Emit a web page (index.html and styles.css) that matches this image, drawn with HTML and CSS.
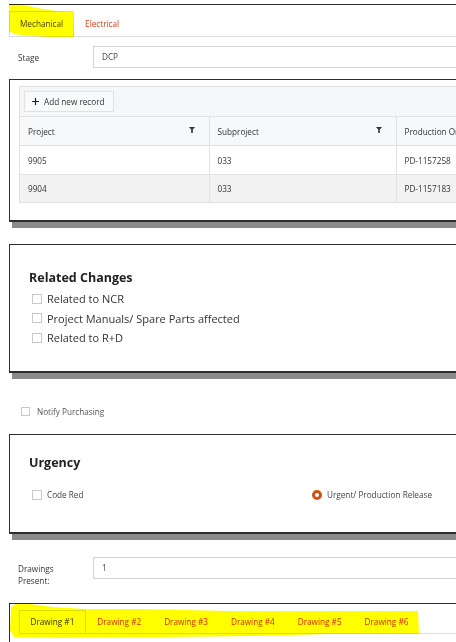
FILE: index.html
```html
<!DOCTYPE html>
<html lang="en">
<head>
    <meta charset="UTF-8">
    <meta name="viewport" content="width=device-width, initial-scale=1.0">
    <title>Change Request</title>
    <link rel="stylesheet" href="styles.css">
</head>
<body>
    <div class="screen">
        <!-- Discipline tabs and stage -->
        <section class="top">
            <nav class="tabs">
                <span class="tab active">Mechanical</span>
                <span class="tab">Electrical</span>
            </nav>
            <div class="field">
                <label class="field-label">Stage</label>
                <div class="field-input">DCP</div>
            </div>
        </section>

        <!-- Production orders grid -->
        <section class="panel panel-grid">
            <div class="grid">
                <div class="grid-toolbar">
                    <button class="btn-add">
                        <svg width="7" height="7" viewBox="0 0 7 7"><path d="M3.5 0V7M0 3.5H7" stroke="#222" stroke-width="1.2"/></svg>
                        Add new record
                    </button>
                </div>
                <table>
                    <colgroup>
                        <col class="col-project">
                        <col class="col-sub">
                        <col class="col-order">
                    </colgroup>
                    <thead>
                        <tr>
                            <th>Project <svg class="filter" viewBox="0 0 6 6"><path d="M0 0H6L3.8 2.6V6H2.2V2.6Z" fill="#333"/></svg></th>
                            <th>Subproject <svg class="filter" viewBox="0 0 6 6"><path d="M0 0H6L3.8 2.6V6H2.2V2.6Z" fill="#333"/></svg></th>
                            <th>Production Order</th>
                        </tr>
                    </thead>
                    <tbody>
                        <tr><td>9905</td><td>033</td><td>PD-1157258</td></tr>
                        <tr class="alt"><td>9904</td><td>033</td><td>PD-1157183</td></tr>
                    </tbody>
                </table>
            </div>
        </section>

        <!-- Related changes -->
        <section class="panel panel-related">
            <h3>Related Changes</h3>
            <ul class="checks">
                <li><span class="box"></span>Related to NCR</li>
                <li><span class="box"></span>Project Manuals/ Spare Parts affected</li>
                <li><span class="box"></span>Related to R+D</li>
            </ul>
        </section>

        <label class="notify"><span class="box small"></span>Notify Purchasing</label>

        <!-- Urgency -->
        <section class="panel panel-urgency">
            <h3>Urgency</h3>
            <div class="urgency-row">
                <label class="opt"><span class="box"></span>Code Red</label>
                <label class="opt"><span class="radio"></span>Urgent/ Production Release</label>
            </div>
        </section>

        <div class="field field-drawings">
            <label class="field-label">Drawings<br>Present:</label>
            <div class="field-input">1</div>
        </div>

        <!-- Drawing tabs -->
        <section class="panel panel-drawings">
            <nav class="tabs">
                <span class="tab active">Drawing #1</span>
                <span class="tab">Drawing #2</span>
                <span class="tab">Drawing #3</span>
                <span class="tab">Drawing #4</span>
                <span class="tab">Drawing #5</span>
                <span class="tab">Drawing #6</span>
            </nav>
        </section>
    </div>

    <!-- marker highlights drawn over the screenshot -->
    <svg class="highlight" viewBox="0 0 456 642" width="456" height="642">
        <polygon points="9,4 16,4 28,6 42,9 56,11 73,12 74,37 52,37 30,36 14,34 9,31"/>
        <polygon points="11,607 18,603 30,604 52,607 85,609 140,609 228,611 418,611 419,634 328,634 255,636 160,637 60,638 14,637 10,630"/>
    </svg>
</body>
</html>
```

FILE: styles.css
```css
html, body {
    margin: 0;
    height: 642px;
    overflow: hidden;
}
body {
    font-family: "Open Sans", Arial, sans-serif;
    font-size: 8.2px;
    color: #333;
    background: #fff;
    position: relative;
}
.screen {
    width: 640px;
    padding-left: 9px;
}

/* tabs */
.top {
    margin-top: 4px;
    border-top: 1px solid #2d2d2d;
    padding-top: 6px;
}
.tabs {
    display: flex;
    border-bottom: 1px solid #dadde1;
    height: 25px;
}
.tab {
    padding: 0 10px;
    line-height: 24px;
    border: 1px solid transparent;
    border-bottom: none;
    color: #d0401e;
}
.tab.active {
    border-color: #dadde1;
    color: #444;
}

/* label + input rows */
.field {
    display: flex;
    align-items: center;
    padding: 9px 0 11px 9px;
}
.field-label {
    width: 75px;
    color: #333;
}
.field-input {
    flex: 1;
    height: 22px;
    box-sizing: border-box;
    border: 1px solid #d0d3d7;
    padding-left: 8px;
    line-height: 20px;
    color: #444;
}

/* framed panels */
.panel {
    border: 1px solid #2d2d2d;
    border-right: none;
    border-bottom-width: 2px;
    box-shadow: 3px 6px 0 #8a8a8a;
}
.panel h3 {
    margin: 0;
    font-size: 12.5px;
    line-height: 17px;
    font-weight: 700;
    color: #222;
}

.panel-grid {
    padding: 6px 0 17px 9px;
}
.grid {
    border: 1px solid #dfe1e4;
    border-right: none;
}
.grid-toolbar {
    height: 30px;
    background: #f5f6f8;
    padding: 4px 0 0 4px;
    box-sizing: border-box;
    border-bottom: 1px solid #dfe1e4;
}
.btn-add {
    height: 21px;
    padding: 0 8px 0 7px;
    border: 1px solid #dfe1e4;
    background: #f9fafb;
    font-family: inherit;
    font-size: 8.2px;
    color: #333;
    display: flex;
    align-items: center;
    gap: 5px;
}
table {
    border-collapse: collapse;
    table-layout: fixed;
    width: 596px;
}
.col-project { width: 189px; }
.col-sub { width: 187px; }
.col-order { width: 220px; }
th, td {
    text-align: left;
    font-weight: 400;
    padding: 0 8px;
    border-right: 1px solid #dfe1e4;
    border-bottom: 1px solid #dfe1e4;
    white-space: nowrap;
    overflow: hidden;
}
th {
    height: 28px;
    background: #f7f8fa;
    position: relative;
}
td {
    height: 28px;
}
tbody tr:last-child td {
    border-bottom: none;
    height: 27px;
}
tr.alt td {
    background: #f2f2f2;
}
.filter {
    position: absolute;
    right: 14px;
    top: 10px;
    width: 6px;
    height: 6px;
}

.panel-related {
    margin-top: 22px;
    padding: 24px 0 23px 19px;
}
.checks {
    list-style: none;
    margin: 3px 0 0;
    padding: 0 0 0 3px;
    font-size: 11px;
    color: #333;
}
.checks li {
    display: flex;
    align-items: center;
    height: 19.5px;
}
.box {
    width: 10px;
    height: 10px;
    box-sizing: border-box;
    border: 1px solid #c9c9c9;
    background: #fff;
    margin-right: 5px;
    flex: none;
}
.box.small {
    width: 9px;
    height: 9px;
    margin-right: 7px;
}

.notify {
    display: flex;
    align-items: center;
    height: 14px;
    margin: 32px 0 15px 12px;
    color: #555;
}

.panel-urgency {
    padding: 19px 0 30px 19px;
}
.urgency-row {
    display: grid;
    grid-template-columns: 280px auto;
    margin-top: 17px;
    padding-left: 3px;
    color: #444;
}
.opt {
    display: flex;
    align-items: center;
    height: 14px;
}
.radio {
    width: 10px;
    height: 10px;
    box-sizing: border-box;
    border-radius: 50%;
    border: 3.5px solid #c8561a;
    background: #fff;
    margin-right: 5px;
}

.field-drawings {
    align-items: flex-start;
    padding: 23px 0 16px 9px;
}
.field-drawings .field-label {
    line-height: 12px;
    margin-top: 6px;
}

.panel-drawings {
    padding: 6px 0 20px 9px;
}
.panel-drawings .tabs {
    height: 23px;
}
.panel-drawings .tab {
    padding: 0 10.5px;
    line-height: 22px;
    color: #d42a1a;
}
.panel-drawings .tab.active {
    color: #333;
}

.highlight {
    position: absolute;
    left: 0;
    top: 0;
    pointer-events: none;
    mix-blend-mode: multiply;
    fill: #ffff00;
}
```
